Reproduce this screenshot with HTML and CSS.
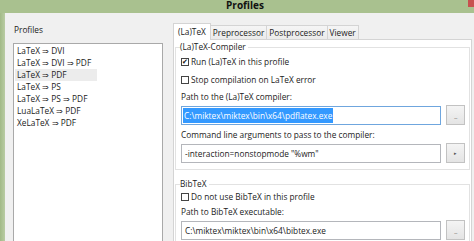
FILE: index.html
```html
<!DOCTYPE html>
<html>
<head>
<meta charset="utf-8">
<link rel="stylesheet" href="styles.css">
</head>
<body>
<div class="titlebar">
  <span class="title">Profiles</span>
  <span class="close"></span>
</div>
<div class="frame">
  <div class="edge"></div>
  <div class="dialog">
    <div class="left">
      <div class="plabel">Profiles</div>
      <div class="list">
        <div class="item">LaTeX ⇒ DVI</div>
        <div class="item">LaTeX ⇒ DVI ⇒ PDF</div>
        <div class="item sel">LaTeX ⇒ PDF</div>
        <div class="item">LaTeX ⇒ PS</div>
        <div class="item">LaTeX ⇒ PS ⇒ PDF</div>
        <div class="item">LuaLaTeX ⇒ PDF</div>
        <div class="item">XeLaTeX ⇒ PDF</div>
      </div>
    </div>
    <div class="right">
      <div class="tabs">
        <div class="tab active">(La)TeX</div>
        <div class="tab">Preprocessor</div>
        <div class="tab">Postprocessor</div>
        <div class="tab">Viewer</div>
      </div>
      <div class="panel">
        <div class="group g1">
          <div class="gtitle">(La)TeX-Compiler</div>
          <div class="check c-run"><span class="box on">✔</span>Run (La)TeX in this profile</div>
          <div class="check c-stop"><span class="box"></span>Stop compilation on LaTeX error</div>
          <div class="flabel f-path">Path to the (La)TeX compiler:</div>
          <div class="row">
            <div class="input focus"><span class="hl">C:\miktex\miktex\bin\x64\pdflatex.exe</span></div>
            <div class="btn"><span class="dots">...</span></div>
          </div>
          <div class="flabel f-cmd">Command line arguments to pass to the compiler:</div>
          <div class="row">
            <div class="input">-interaction=nonstopmode "%wm"</div>
            <div class="btn"><span class="arrow">▸</span></div>
          </div>
        </div>
        <div class="group g2">
          <div class="gtitle">BibTeX</div>
          <div class="check c-bib"><span class="box"></span>Do not use BibTeX in this profile</div>
          <div class="flabel f-bib">Path to BibTeX executable:</div>
          <div class="row">
            <div class="input">C:\miktex\miktex\bin\x64\bibtex.exe</div>
            <div class="btn"><span class="dots">...</span></div>
          </div>
        </div>
      </div>
    </div>
  </div>
</div>
</body>
</html>
```
FILE: styles.css
```css
* { box-sizing: border-box; }
html, body { margin: 0; padding: 0; }
body {
  width: 474px;
  height: 241px;
  overflow: hidden;
  background: #f0f0f0;
  font-family: "Open Sans", "Noto Sans", sans-serif;
  font-size: 8.3px;
  color: #222;
}
.titlebar {
  height: 13px;
  background: #a9c18f;
  position: relative;
  overflow: hidden;
  display: flex;
  justify-content: center;
  padding-left: 16px;
}
.title {
  font-weight: bold;
  font-size: 10px;
  line-height: 12px;
  margin-top: -1px;
  color: #111;
}
.close {
  position: absolute;
  right: 0;
  top: 0;
  width: 6px;
  height: 7px;
  background: #c7504f;
}
.frame {
  display: flex;
  height: 228px;
}
.edge {
  width: 5px;
  background: linear-gradient(to right, #a2ba87, #b9cca3);
}
.dialog {
  flex: 1;
  display: flex;
  padding: 10px 2px 0 8px;
  background: #f0f0f0;
}
.left {
  width: 150px;
  display: flex;
  flex-direction: column;
}
.plabel {
  line-height: 14px;
  height: 14px;
  padding-left: 1px;
}
.list {
  margin-top: 6px;
  flex: 1;
  background: #fff;
  border: 1px solid #a9a9a9;
  border-bottom: none;
  padding: 1px 0 0 1px;
}
.item {
  line-height: 12px;
  height: 12px;
  padding-left: 2px;
  white-space: nowrap;
}
.item.sel {
  background: #ececec;
  width: 82px;
}
.right {
  flex: 1;
  margin-left: 10px;
  display: flex;
  flex-direction: column;
}
.tabs {
  display: flex;
  align-items: flex-end;
  height: 16px;
}
.tab {
  height: 14px;
  line-height: 13px;
  padding: 0 2px;
  border: 1px solid #d4d4d4;
  border-bottom: none;
  margin-left: -1px;
  background: linear-gradient(#f5f5f5, #ebebeb);
}
.tab.active {
  height: 17px;
  margin-left: 0;
  margin-bottom: -1px;
  padding: 0 4px;
  line-height: 16px;
  background: #fff;
  position: relative;
  z-index: 1;
}
.panel {
  flex: 1;
  background: #fff;
  border: 1px solid #d4d4d4;
  border-bottom: none;
  padding: 7px 1px 0 1px;
}
.group {
  border: 1px solid #e2e2e2;
  padding: 0 3px 6px 5px;
}
.g2 { margin-top: 14px; border-bottom: none; }
.gtitle {
  display: block;
  width: max-content;
  line-height: 12px;
  height: 12px;
  margin-top: -7px;
  margin-left: -1px;
  background: #fff;
  padding-right: 2px;
}
.check {
  display: flex;
  align-items: center;
  height: 12px;
  line-height: 12px;
}
.c-run { margin-top: 3px; }
.c-stop { margin-top: 6px; }
.c-bib { margin-top: 1px; }
.box {
  width: 8px;
  height: 8px;
  border: 1px solid #444;
  background: #fff;
  margin-right: 2px;
  font-size: 7px;
  line-height: 6px;
  text-align: center;
  color: #111;
  overflow: hidden;
}
.flabel {
  line-height: 12px;
  height: 12px;
}
.f-path { margin-top: 5px; }
.f-cmd { margin-top: 4px; }
.f-bib { margin-top: 3px; }
.row {
  display: flex;
  align-items: center;
  margin-top: 2px;
}
.input {
  width: 260px;
  height: 19px;
  border: 1px solid #b4b6bb;
  background: #fff;
  line-height: 17px;
  padding-left: 3px;
  white-space: nowrap;
}
.input.focus { border-color: #6fa6de; padding-left: 1px; }
.hl {
  background: #3399ff;
  color: #fff;
  padding: 2px 1px;
}
.btn {
  width: 19px;
  height: 20px;
  margin-left: 5px;
  border: 1px solid #c2c2c2;
  background: linear-gradient(#f4f4f4, #e4e4e4);
  display: flex;
  align-items: center;
  justify-content: center;
  color: #555;
}
.dots { font-size: 6px; line-height: 6px; margin-top: 4px; letter-spacing: -0.5px; }
.arrow { font-size: 5px; line-height: 5px; }
```
